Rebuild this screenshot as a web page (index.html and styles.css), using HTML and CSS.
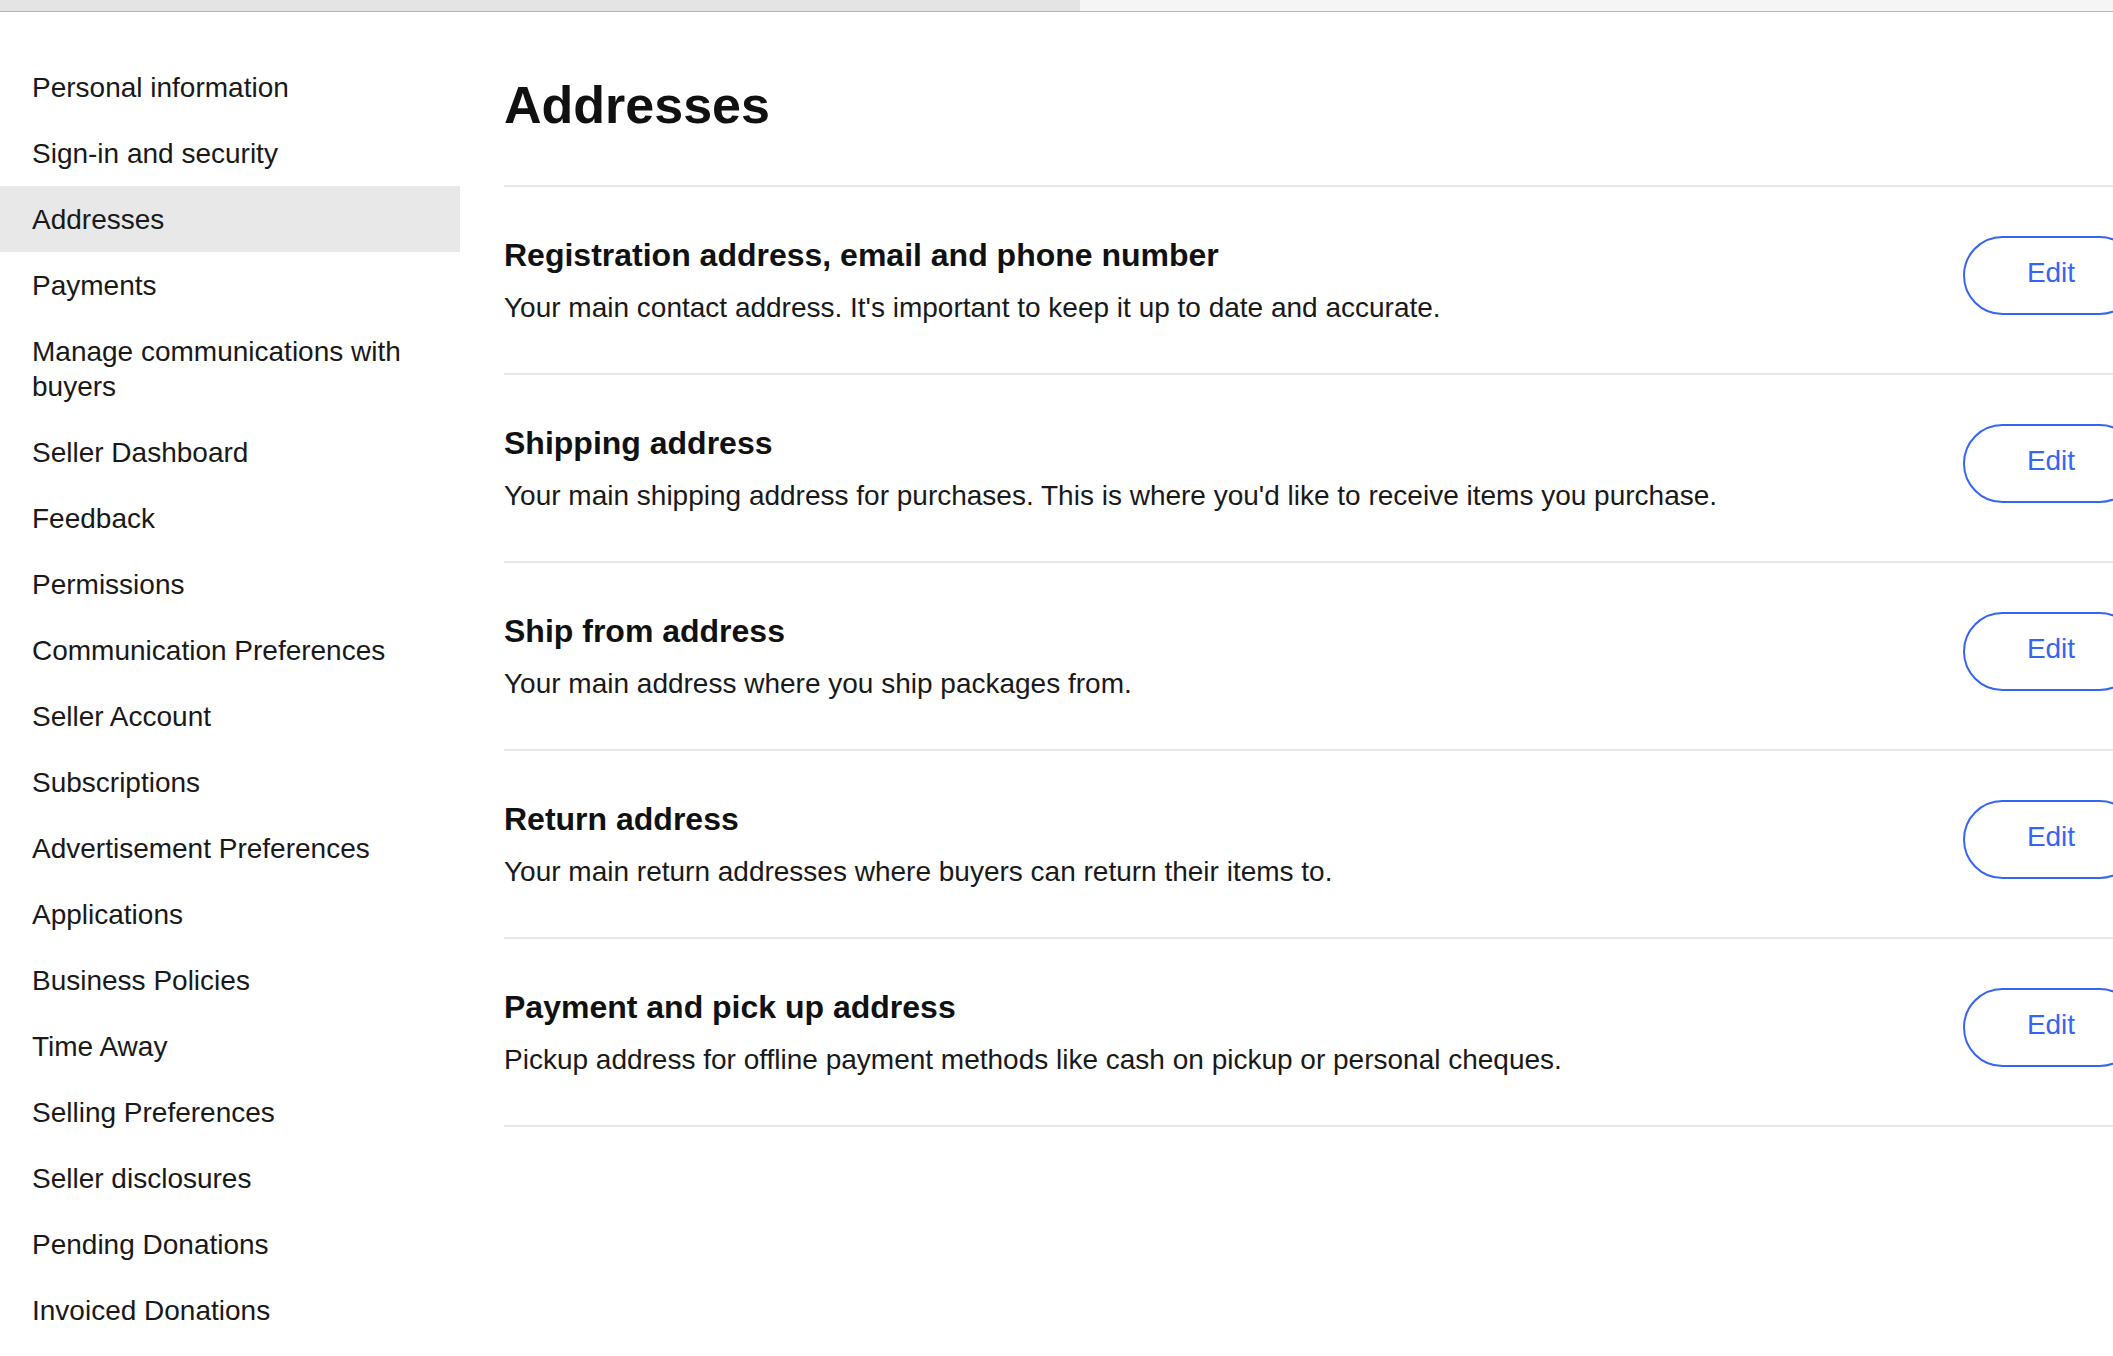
FILE: index.html
```html
<!DOCTYPE html>
<html lang="en">
<head>
<meta charset="utf-8">
<title>Addresses</title>
<link rel="stylesheet" href="styles.css">
</head>
<body>
<div class="progress"><div class="progress-fill" style="width:1080px"></div></div>
<div class="layout">
  <nav class="sidebar">
    <a class="nav-item">Personal information</a>
    <a class="nav-item">Sign-in and security</a>
    <a class="nav-item active">Addresses</a>
    <a class="nav-item">Payments</a>
    <a class="nav-item">Manage communications with buyers</a>
    <a class="nav-item">Seller Dashboard</a>
    <a class="nav-item">Feedback</a>
    <a class="nav-item">Permissions</a>
    <a class="nav-item">Communication Preferences</a>
    <a class="nav-item">Seller Account</a>
    <a class="nav-item">Subscriptions</a>
    <a class="nav-item">Advertisement Preferences</a>
    <a class="nav-item">Applications</a>
    <a class="nav-item">Business Policies</a>
    <a class="nav-item">Time Away</a>
    <a class="nav-item">Selling Preferences</a>
    <a class="nav-item">Seller disclosures</a>
    <a class="nav-item">Pending Donations</a>
    <a class="nav-item">Invoiced Donations</a>
  </nav>
  <main class="main">
    <h1 class="page-title">Addresses</h1>
    <section class="row">
      <div class="row-text">
        <h2 class="row-title">Registration address, email and phone number</h2>
        <p class="row-desc">Your main contact address. It's important to keep it up to date and accurate.</p>
      </div>
      <button class="edit-btn">Edit</button>
    </section>
    <section class="row">
      <div class="row-text">
        <h2 class="row-title">Shipping address</h2>
        <p class="row-desc">Your main shipping address for purchases. This is where you'd like to receive items you purchase.</p>
      </div>
      <button class="edit-btn">Edit</button>
    </section>
    <section class="row">
      <div class="row-text">
        <h2 class="row-title">Ship from address</h2>
        <p class="row-desc">Your main address where you ship packages from.</p>
      </div>
      <button class="edit-btn">Edit</button>
    </section>
    <section class="row">
      <div class="row-text">
        <h2 class="row-title">Return address</h2>
        <p class="row-desc">Your main return addresses where buyers can return their items to.</p>
      </div>
      <button class="edit-btn">Edit</button>
    </section>
    <section class="row">
      <div class="row-text">
        <h2 class="row-title">Payment and pick up address</h2>
        <p class="row-desc">Pickup address for offline payment methods like cash on pickup or personal cheques.</p>
      </div>
      <button class="edit-btn">Edit</button>
    </section>
  </main>
</div>
</body>
</html>
```

FILE: styles.css
```css
html, body {
  margin: 0;
  padding: 0;
  overflow: hidden;
  background: #ffffff;
}

body {
  font-family: "Liberation Sans", Arial, Helvetica, sans-serif;
  color: #191919;
  width: 2113px;
  height: 1356px;
}

.progress {
  height: 11px;
  background: #f5f5f5;
  border-bottom: 1px solid #b3b3b3;
}

.progress-fill {
  height: 100%;
  background: #e4e4e4;
}

.layout {
  display: flex;
  align-items: flex-start;
}

.sidebar {
  flex: 0 0 460px;
  width: 460px;
  padding-top: 42px;
  display: flex;
  flex-direction: column;
}

.nav-item {
  display: block;
  padding: 15.5px 32px;
  font-size: 28px;
  line-height: 35px;
  color: #191919;
  text-decoration: none;
}

.nav-item.active {
  background: #e8e8e8;
}

.main {
  flex: 0 0 1635px;
  width: 1635px;
  margin-left: 44px;
  padding-top: 63px;
}

.page-title {
  margin: 0;
  font-size: 52px;
  line-height: 60px;
  font-weight: 700;
  color: #111111;
  padding-bottom: 50px;
  border-bottom: 2px solid #e5e5e5;
}

.row {
  display: flex;
  align-items: flex-start;
  justify-content: space-between;
  padding: 48px 0 47px;
  border-bottom: 2px solid #e5e5e5;
}

.row-text {
  flex: 1 1 auto;
}

.row-title {
  margin: 0;
  font-size: 32px;
  line-height: 40px;
  font-weight: 700;
  color: #111111;
}

.row-desc {
  margin: 15px 0 0;
  font-size: 28px;
  line-height: 36px;
  color: #191919;
}

.edit-btn {
  flex: 0 0 176px;
  width: 176px;
  height: 79px;
  margin-top: 1px;
  border: 2px solid #3665f3;
  border-radius: 40px;
  background: #ffffff;
  color: #3665f3;
  font-family: "Liberation Sans", Arial, Helvetica, sans-serif;
  font-size: 28px;
  padding: 0 0 5px;
}
```
